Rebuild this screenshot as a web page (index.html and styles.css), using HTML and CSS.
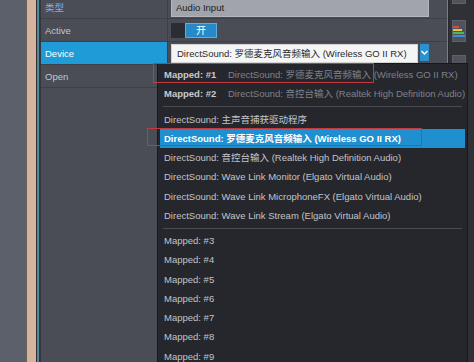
FILE: index.html
```html
<!DOCTYPE html>
<html lang="zh">
<head>
<meta charset="utf-8">
<title>Device</title>
<link rel="stylesheet" href="styles.css">
</head>
<body>
<div class="app">
  <div class="gutter"></div>
  <div class="seam"></div>
  <div class="tan"></div>
  <div class="edge"></div>
  <div class="teal"></div>
  <div class="edge2"></div>
  <div class="panel">
    <div class="grid">
      <div class="row">
        <div class="label label-cat">类型</div>
        <div class="value"><div class="textbox">Audio Input</div></div>
      </div>
      <div class="row">
        <div class="label">Active</div>
        <div class="value">
          <div class="toggle"><span class="toggle-off"></span><span class="toggle-on">开</span></div>
        </div>
      </div>
      <div class="row row-sel">
        <div class="label">Device</div>
        <div class="value">
          <div class="combo">
            <span class="combo-text">DirectSound: 罗德麦克风音频输入 (Wireless GO II RX)</span>
            <span class="combo-btn"><svg width="7" height="5" viewBox="0 0 7 5"><path d="M0.5 1 L3.5 4 L6.5 1" fill="none" stroke="#fff" stroke-width="1.4"/></svg></span>
          </div>
        </div>
      </div>
      <div class="row">
        <div class="label">Open</div>
        <div class="value"></div>
      </div>
    </div>
  </div>
  <div class="vline"></div>
  <div class="side">
    <div class="sbtn sbtn-top"></div>
    <div class="sbtn sbtn-icon">
      <svg width="12" height="12" viewBox="0 0 12 12">
        <rect x="0" y="1" width="6" height="2" fill="#e0463c"/>
        <rect x="0" y="4" width="9" height="2" fill="#e8c23a"/>
        <rect x="0" y="7" width="11" height="2" fill="#4cb85a"/>
        <rect x="0" y="10" width="12" height="2" fill="#3b8fdc"/>
      </svg>
    </div>
    <div class="sbtn sbtn-low"></div>
  </div>
</div>

<div class="menu">
  <div class="item"><span class="map">Mapped: #1</span><span class="dim">DirectSound: 罗德麦克风音频输入 (Wireless GO II RX)</span></div>
  <div class="item"><span class="map">Mapped: #2</span><span class="dim">DirectSound: 音控台输入 (Realtek High Definition Audio)</span></div>
  <div class="sep"></div>
  <div class="item">DirectSound: 主声音捕获驱动程序</div>
  <div class="item item-sel">DirectSound: 罗德麦克风音频输入 (Wireless GO II RX)</div>
  <div class="item">DirectSound: 音控台输入 (Realtek High Definition Audio)</div>
  <div class="item">DirectSound: Wave Link Monitor (Elgato Virtual Audio)</div>
  <div class="item">DirectSound: Wave Link MicrophoneFX (Elgato Virtual Audio)</div>
  <div class="item">DirectSound: Wave Link Stream (Elgato Virtual Audio)</div>
  <div class="sep"></div>
  <div class="item">Mapped: #3</div>
  <div class="item">Mapped: #4</div>
  <div class="item">Mapped: #5</div>
  <div class="item">Mapped: #6</div>
  <div class="item">Mapped: #7</div>
  <div class="item">Mapped: #8</div>
  <div class="item">Mapped: #9</div>
</div>

<div class="mark mark-1"></div>
<div class="mark mark-2"></div>
</body>
</html>
```

FILE: styles.css
```css
* { box-sizing: border-box; }
html, body { margin: 0; padding: 0; }
body {
  width: 474px;
  height: 362px;
  overflow: hidden;
  position: relative;
  background: #4a4d56;
  font-family: "Liberation Sans", "Noto Sans CJK SC", sans-serif;
  font-size: 9.5px;
}
.app { display: flex; height: 362px; }
.gutter { width: 25px; background: #5c606a; }
.seam { width: 2px; background: #6b5e57; }
.tan { width: 9px; background: #d5b39e; }
.edge { width: 1px; background: #2c2e33; }
.teal { width: 2px; background: #55899a; }
.edge2 { width: 2px; background: #34363c; }

.panel { width: 406px; background: #4a4d56; overflow: hidden; }
.grid { margin-top: -4px; }
.row {
  display: grid;
  grid-template-columns: 127px 1fr;
  height: 23px;
  border-bottom: 1px solid #3d4047;
}
.label {
  display: flex;
  align-items: center;
  padding-left: 4px;
  color: #c4c6cc;
  border-right: 1px solid #3b3e45;
}
.label-cat { color: #86aee0; }
.row-sel .label { background: #1f9bd7; color: #ffffff; }
.value { display: flex; align-items: center; padding-left: 3px; }
.textbox {
  width: 258px;
  height: 19px;
  line-height: 17px;
  padding-left: 4px;
  background: #a1a4aa;
  border: 1px solid #b4b6bb;
  color: #1c1d20;
}
.toggle { display: flex; height: 15px; }
.toggle-off { width: 14px; background: #2b2d32; }
.toggle-on {
  width: 32px;
  background: #2889c8;
  border: 1px solid #5aaee0;
  color: #ffffff;
  font-size: 10px;
  line-height: 13px;
  text-align: center;
}
.combo { display: flex; height: 19px; gap: 2px; }
.combo-text {
  width: 247px;
  background: #f5f5f5;
  border: 1px solid #d4d4d4;
  color: #2a2a2a;
  padding-left: 5px;
  line-height: 17px;
  white-space: nowrap;
}
.combo-btn {
  width: 9px;
  height: 17px;
  background: #2a92d0;
  display: flex;
  align-items: center;
  justify-content: center;
}
.vline { width: 2px; background: #4b8db0; border-right: 1px solid #26282c; }
.side {
  width: 25px;
  background: #2f3137;
  display: flex;
  flex-direction: column;
  padding-left: 3px;
}
.sbtn {
  width: 14px;
  background: #50535b;
  border: 1px solid #5e616a;
}
.sbtn-top { margin-top: -8px; height: 12px; }
.sbtn-icon {
  margin-top: 16px;
  height: 22px;
  display: flex;
  align-items: center;
  justify-content: center;
}
.sbtn-low { margin-top: 13px; height: 16px; }

.menu {
  position: absolute;
  left: 157px;
  top: 63px;
  width: 311px;
  height: 299px;
  overflow: hidden;
  background: #25272d;
  border: 1px solid #17181b;
  border-bottom: 0;
  padding: 1px 2px 0;
}
.item {
  height: 19.25px;
  line-height: 19.25px;
  padding-left: 4px;
  color: #c2c4c9;
  white-space: nowrap;
}
.map { display: inline-block; width: 64px; font-weight: bold; color: #c8cace; }
.dim { color: #7f828a; }
.item-sel { background: #1f8fd0; color: #ffffff; font-weight: bold; }
.sep { height: 6px; display: flex; align-items: center; padding: 0 3px; }
.sep::after { content: ""; flex: 1; height: 1px; background: #484b52; }

.mark { position: absolute; border: 1px solid #c23a3f; }
.mark-1 { left: 153px; top: 63px; width: 221px; height: 20px; }
.mark-2 { left: 147px; top: 128px; width: 275px; height: 18px; }
```
